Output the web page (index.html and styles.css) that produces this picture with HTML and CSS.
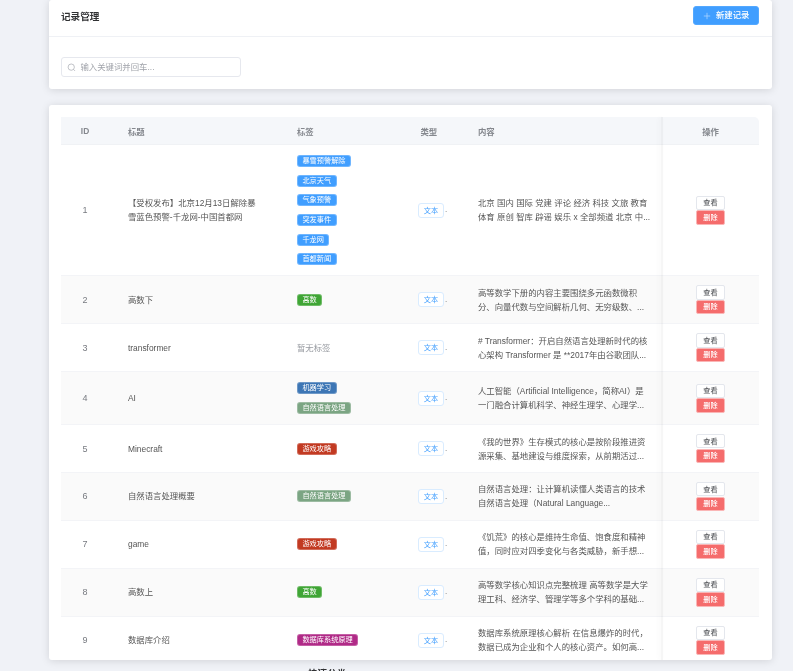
FILE: index.html
```html
<!DOCTYPE html>
<html lang="zh-CN">
<head>
<meta charset="utf-8">
<title>记录管理</title>
<link rel="stylesheet" href="styles.css">
</head>
<body>
<main class="page">
  <section class="card top-card">
    <header class="card-head">
      <h1 class="card-title">记录管理</h1>
      <button class="btn-new">
        <svg class="plus" viewBox="0 0 10 10"><path d="M5 1v8M1 5h8"/></svg>
        <span>新建记录</span>
      </button>
    </header>
    <div class="card-body">
      <div class="search">
        <svg class="search-icon" viewBox="0 0 10 10"><circle cx="4.7" cy="5.7" r="3.5"/><path d="M7.3 8.3l1.6 1.6"/></svg>
        <span class="placeholder">输入关键词并回车...</span>
      </div>
    </div>
  </section>

  <section class="card table-card">
    <table class="records">
      <colgroup>
        <col class="c-id"><col class="c-title"><col class="c-tags"><col class="c-type"><col class="c-content"><col class="c-ops">
      </colgroup>
      <thead>
        <tr><th class="id">ID</th><th class="title">标题</th><th class="tags">标签</th><th class="type">类型</th><th class="content">内容</th><th class="ops">操作</th></tr>
      </thead>
      <tbody>
        <tr>
          <td class="id">1</td>
          <td class="title">【受权发布】北京12月13日解除暴雪蓝色预警-千龙网-中国首都网</td>
          <td class="tags"><div class="tag-list"><span class="tag blue">暴雪预警解除</span><span class="tag blue">北京天气</span><span class="tag blue">气象预警</span><span class="tag blue">突发事件</span><span class="tag blue">千龙网</span><span class="tag blue">首都新闻</span></div></td>
          <td class="type"><span class="type-tag">文本</span><span class="dot">.</span></td>
          <td class="content"><div class="excerpt">北京 国内 国际 党建 评论 经济 科技 文旅 教育 体育 原创 智库 辟谣 娱乐 x 全部频道 北京 中...</div></td>
          <td class="ops"><div class="op-stack"><button class="op view">查看</button><button class="op del">删除</button></div></td>
        </tr>
        <tr>
          <td class="id">2</td>
          <td class="title">高数下</td>
          <td class="tags"><div class="tag-list"><span class="tag green">高数</span></div></td>
          <td class="type"><span class="type-tag">文本</span><span class="dot">.</span></td>
          <td class="content"><div class="excerpt">高等数学下册的内容主要围绕多元函数微积分、向量代数与空间解析几何、无穷级数、...</div></td>
          <td class="ops"><div class="op-stack"><button class="op view">查看</button><button class="op del">删除</button></div></td>
        </tr>
        <tr>
          <td class="id">3</td>
          <td class="title">transformer</td>
          <td class="tags"><span class="no-tag">暂无标签</span></td>
          <td class="type"><span class="type-tag">文本</span><span class="dot">.</span></td>
          <td class="content"><div class="excerpt"># Transformer：开启自然语言处理新时代的核心架构 Transformer 是 **2017年由谷歌团队...</div></td>
          <td class="ops"><div class="op-stack"><button class="op view">查看</button><button class="op del">删除</button></div></td>
        </tr>
        <tr>
          <td class="id">4</td>
          <td class="title">AI</td>
          <td class="tags"><div class="tag-list"><span class="tag navy">机器学习</span><span class="tag sage">自然语言处理</span></div></td>
          <td class="type"><span class="type-tag">文本</span><span class="dot">.</span></td>
          <td class="content"><div class="excerpt">人工智能（Artificial Intelligence，简称AI）是一门融合计算机科学、神经生理学、心理学...</div></td>
          <td class="ops"><div class="op-stack"><button class="op view">查看</button><button class="op del">删除</button></div></td>
        </tr>
        <tr>
          <td class="id">5</td>
          <td class="title">Minecraft</td>
          <td class="tags"><div class="tag-list"><span class="tag red">游戏攻略</span></div></td>
          <td class="type"><span class="type-tag">文本</span><span class="dot">.</span></td>
          <td class="content"><div class="excerpt">《我的世界》生存模式的核心是按阶段推进资源采集、基地建设与维度探索，从前期活过...</div></td>
          <td class="ops"><div class="op-stack"><button class="op view">查看</button><button class="op del">删除</button></div></td>
        </tr>
        <tr>
          <td class="id">6</td>
          <td class="title">自然语言处理概要</td>
          <td class="tags"><div class="tag-list"><span class="tag sage">自然语言处理</span></div></td>
          <td class="type"><span class="type-tag">文本</span><span class="dot">.</span></td>
          <td class="content"><div class="excerpt">自然语言处理：让计算机读懂人类语言的技术 自然语言处理（Natural Language...</div></td>
          <td class="ops"><div class="op-stack"><button class="op view">查看</button><button class="op del">删除</button></div></td>
        </tr>
        <tr>
          <td class="id">7</td>
          <td class="title">game</td>
          <td class="tags"><div class="tag-list"><span class="tag red">游戏攻略</span></div></td>
          <td class="type"><span class="type-tag">文本</span><span class="dot">.</span></td>
          <td class="content"><div class="excerpt">《饥荒》的核心是维持生命值、饱食度和精神值，同时应对四季变化与各类威胁，新手想...</div></td>
          <td class="ops"><div class="op-stack"><button class="op view">查看</button><button class="op del">删除</button></div></td>
        </tr>
        <tr>
          <td class="id">8</td>
          <td class="title">高数上</td>
          <td class="tags"><div class="tag-list"><span class="tag green">高数</span></div></td>
          <td class="type"><span class="type-tag">文本</span><span class="dot">.</span></td>
          <td class="content"><div class="excerpt">高等数学核心知识点完整梳理 高等数学是大学理工科、经济学、管理学等多个学科的基础...</div></td>
          <td class="ops"><div class="op-stack"><button class="op view">查看</button><button class="op del">删除</button></div></td>
        </tr>
        <tr>
          <td class="id">9</td>
          <td class="title">数据库介绍</td>
          <td class="tags"><div class="tag-list"><span class="tag magenta">数据库系统原理</span></div></td>
          <td class="type"><span class="type-tag">文本</span><span class="dot">.</span></td>
          <td class="content"><div class="excerpt">数据库系统原理核心解析 在信息爆炸的时代，数据已成为企业和个人的核心资产。如何高...</div></td>
          <td class="ops"><div class="op-stack"><button class="op view">查看</button><button class="op del">删除</button></div></td>
        </tr>
      </tbody>
    </table>
  </section>
  <h2 class="next-title">快速分类</h2>
</main>
</body>
</html>
```

FILE: styles.css
```css
* { box-sizing: border-box; }
html, body { margin: 0; height: 671px; overflow: hidden; }
body {
  background: #f0f2f7;
  font-family: "Liberation Sans", "Noto Sans CJK SC", sans-serif;
  color: #555;
}
.page { width: 723px; margin-left: 49px; filter: blur(.3px); }
.card {
  background: #fff;
  border-radius: 3px;
  box-shadow: 0 1px 8px rgba(0, 0, 0, .13);
}
.top-card { height: 89px; }
.card-head {
  height: 37px;
  padding: 6px 13px 0 12px;
  border-bottom: 1px solid #eff1f5;
  display: flex;
  justify-content: space-between;
  align-items: flex-start;
}
.card-title {
  margin: 0;
  font-size: 9.6px;
  line-height: 21px;
  font-weight: 700;
  color: #303133;
}
.btn-new {
  width: 66px;
  height: 19px;
  padding: 0 0 0 9px;
  border: 1px solid #53a8ff;
  border-radius: 3px;
  background: #409eff;
  color: #fff;
  font: 500 8.4px/1 "Liberation Sans", "Noto Sans CJK SC", sans-serif;
  display: flex;
  align-items: center;
  gap: 5px;
}
.plus { width: 8px; height: 8px; fill: none; stroke: #b3d8ff; stroke-width: .9; }
.card-body { padding: 20px 0 0 11.5px; }
.search {
  width: 180.5px;
  height: 19.5px;
  border: 1px solid #e6e8ee;
  border-radius: 3px;
  padding: 0 0 1px 5.5px;
  display: flex;
  align-items: center;
  gap: 4.5px;
}
.search-icon { width: 9px; height: 9px; fill: none; stroke: #a8abb2; stroke-width: .8; }
.placeholder { font-size: 8.4px; color: #a0a3aa; }
.table-card {
  position: relative;
  height: 555px;
  margin-top: 16px;
  padding: 12px 13px 0 12px;
  overflow: hidden;
}
.table-card::after {
  content: "";
  position: absolute;
  top: 12px;
  bottom: 0;
  left: 612px;
  width: 2px;
  background: rgba(0, 0, 0, .035);
  box-shadow: -2px 0 4px rgba(0, 0, 0, .04);
}
.records {
  width: 698px;
  table-layout: fixed;
  border-collapse: separate;
  border-spacing: 0;
}
.c-id { width: 48px; }
.c-title { width: 178px; }
.c-tags { width: 121px; }
.c-type { width: 60px; }
.c-content { width: 194px; }
.c-ops { width: 97px; }
th {
  height: 28px;
  padding: 0 0 0 10px;
  background: #f5f7fa;
  color: #85888e;
  font-size: 8.4px;
  font-weight: 700;
  text-align: left;
  border-bottom: 1px solid #f0f2f5;
}
th.ops { border-top-right-radius: 5px; }
td {
  padding: 9px 0 9px 10px;
  font-size: 8.4px;
  line-height: 14px;
  border-bottom: 1px solid #f3f4f7;
}
tbody tr:nth-child(even) td { background: #fafafa; }
tbody tr:nth-child(odd) td { background: #fff; }
th.id, td.id { padding-left: 0; text-align: center; }
td.id { color: #777a80; font-size: 9px; }
th.title, td.title { padding-left: 19px; padding-right: 30px; }
.tag-list { display: flex; flex-direction: column; align-items: flex-start; gap: 7.6px; padding: 1.2px 0; }
.tag {
  height: 12px;
  padding: 0 4.4px;
  border: 1px solid rgba(255, 255, 255, .25);
  border-radius: 3px;
  font-size: 7.2px;
  line-height: 10px;
  color: #fff;
  white-space: nowrap;
}
.blue { background: #409eff; }
.green { background: #3fa535; }
.navy { background: #3d76b5; }
.sage { background: #7ba583; }
.red { background: #c23a22; }
.magenta { background: #b02a87; }
.no-tag { color: #999ca2; }
th.type { padding-left: 12.5px; }
.type-tag {
  display: inline-block;
  width: 26px;
  height: 15px;
  border: 1px solid #d9ecff;
  border-radius: 3px;
  background: #fff;
  color: #409eff;
  font-size: 7.2px;
  line-height: 13px;
  text-align: center;
  vertical-align: middle;
}
.dot { margin-left: 1px; font-size: 8px; color: #606266; vertical-align: middle; }
.excerpt { width: 174px; }
th.ops, td.ops { padding-left: 0; text-align: center; }
.op-stack { display: flex; flex-direction: column; align-items: center; gap: .3px; }
.op {
  width: 29px;
  height: 14.3px;
  padding: 0;
  border: 1px solid #e4e7ed;
  border-radius: 2px;
  background: #fff;
  color: #606266;
  font: 500 7.2px/1 "Liberation Sans", "Noto Sans CJK SC", sans-serif;
}
.op.del { background: #f56c6c; border-color: #fab6b6; color: #fff; }
.next-title {
  margin: 7px 0 0 259px;
  font-size: 9.6px;
  line-height: 14px;
  font-weight: 700;
  color: #303133;
}
```
